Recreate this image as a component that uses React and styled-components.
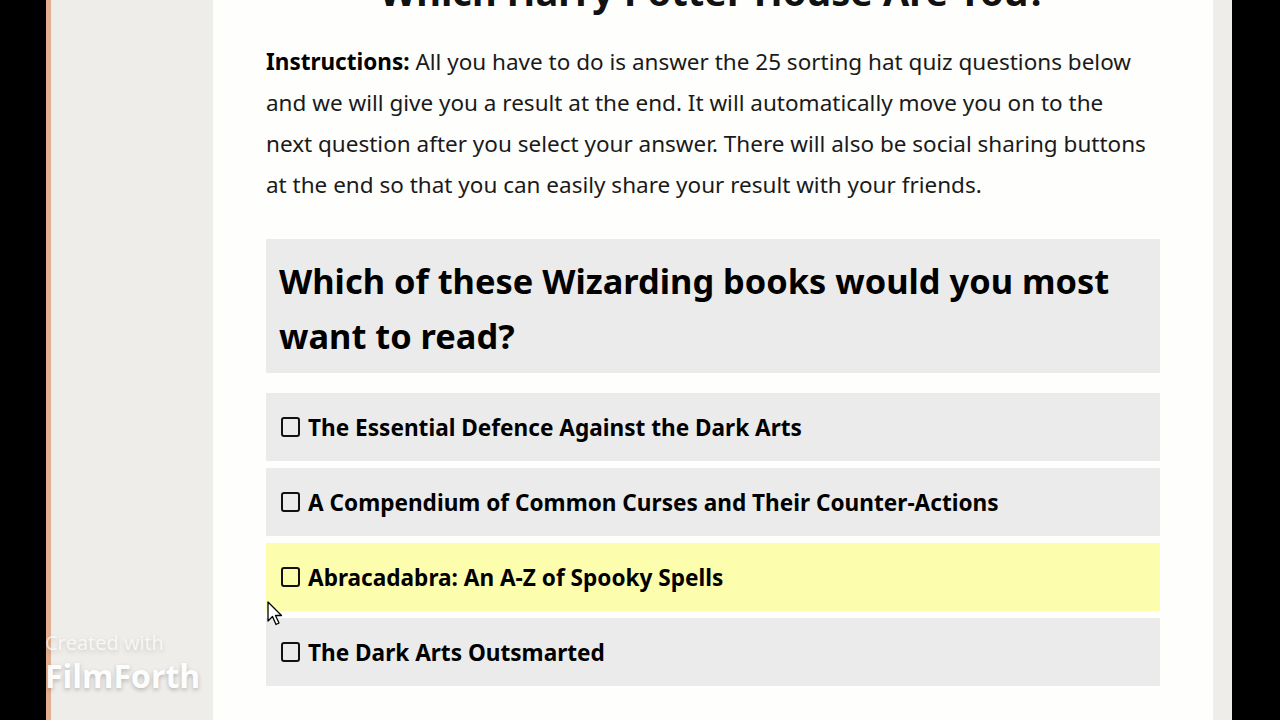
import React from "react";
import styled, { createGlobalStyle } from "styled-components";

const GlobalStyle = createGlobalStyle`
  html, body {
    margin: 0;
    padding: 0;
    background: #000;
  }
  body {
    font-family: "Noto Sans", "Open Sans", Arial, sans-serif;
  }
`;

const Frame = styled.div`
  width: 1280px;
  height: 720px;
  display: flex;
  overflow: hidden;
  position: relative;
  background: #000;
`;

const Bar = styled.div`
  flex: 0 0 ${(p) => p.w}px;
  background: ${(p) => p.bg};
`;

const Page = styled.main`
  flex: 0 0 1000px;
  background: #fefefd;
  box-sizing: border-box;
  padding: 0 53px;
  color: #111;
`;

const Heading = styled.h1`
  margin: -32px 0 0;
  font-size: 38px;
  line-height: 46px;
  font-weight: 700;
  text-align: center;
  color: #111;
`;

const Instructions = styled.p`
  margin: 27px 0 0;
  font-size: 22.5px;
  line-height: 41px;
  color: #1a1a1a;
  white-space: nowrap;

  b {
    font-weight: 700;
    color: #000;
  }
`;

const Question = styled.section`
  margin-top: 34px;
  background: #ebebeb;
  padding: 14px 13px 10px;
`;

const QuestionTitle = styled.h2`
  margin: 0;
  font-size: 34.4px;
  line-height: 55px;
  font-weight: 700;
  color: #000;
  white-space: nowrap;
`;

const Options = styled.div`
  margin-top: 20px;
  display: flex;
  flex-direction: column;
  gap: 7px;
`;

const Option = styled.div`
  height: 68px;
  display: flex;
  align-items: center;
  gap: 8px;
  padding-left: 15px;
  background: ${(p) => (p.hover ? "#fdfdae" : "#ebebeb")};
  font-size: 22.6px;
  font-weight: 700;
  color: #000;
`;

const Box = styled.span`
  width: 15px;
  height: 16px;
  border: 2px solid #111;
  border-radius: 3px;
  flex: none;
`;

const Cursor = styled.svg`
  position: absolute;
  left: 267px;
  top: 601px;
`;

const Watermark = styled.div`
  position: absolute;
  left: 45px;
  top: 633px;
  color: #fff;
  text-shadow: 0 2px 4px rgba(0, 0, 0, 0.25);
  line-height: 1;
`;

const WmSmall = styled.div`
  font-size: 20px;
  opacity: 0.6;
  font-family: "Open Sans", sans-serif;
`;

const WmBig = styled.div`
  margin-top: 7px;
  font-size: 32px;
  font-weight: 700;
  font-family: "Open Sans", sans-serif;
  opacity: 0.92;
`;

const answers = [
  "The Essential Defence Against the Dark Arts",
  "A Compendium of Common Curses and Their Counter-Actions",
  "Abracadabra: An A-Z of Spooky Spells",
  "The Dark Arts Outsmarted",
];

export default function App() {
  return (
    <>
      <GlobalStyle />
      <Frame>
        <Bar w={46} bg="#000" />
        <Bar w={5} bg="#e2b090" />
        <Bar w={162} bg="#eeedea" />
        <Page>
          <Heading>Which Harry Potter House Are You?</Heading>
          <Instructions>
            <b>Instructions:</b> All you have to do is answer the 25 sorting hat quiz questions below
            <br />
            and we will give you a result at the end. It will automatically move you on to the
            <br />
            next question after you select your answer. There will also be social sharing buttons
            <br />
            at the end so that you can easily share your result with your friends.
          </Instructions>
          <Question>
            <QuestionTitle>
              Which of these Wizarding books would you most
              <br />
              want to read?
            </QuestionTitle>
          </Question>
          <Options>
            {answers.map((a, i) => (
              <Option key={a} hover={i === 2}>
                <Box />
                {a}
              </Option>
            ))}
          </Options>
        </Page>
        <Bar w={19} bg="#eeedea" />
        <Bar w={48} bg="#000" />
        <Watermark>
          <WmSmall>Created with</WmSmall>
          <WmBig>FilmForth</WmBig>
        </Watermark>
        <Cursor width="18" height="26" viewBox="0 0 18 26">
          <path d="M1 1 L1 20 L5.5 15.5 L9 23.5 L12 22 L8.5 14.5 L14.5 14.5 Z" fill="#fff" stroke="#000" strokeWidth="1.3" strokeLinejoin="round" />
        </Cursor>
      </Frame>
    </>
  );
}
